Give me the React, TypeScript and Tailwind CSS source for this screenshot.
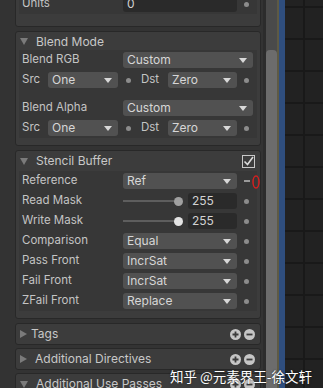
import type { ReactNode } from 'react'

const font = { fontFamily: 'Inter, "Noto Sans", sans-serif' }

function Dot() {
  return (
    <div className="flex w-[19px] shrink-0 items-center justify-center">
      <div className="h-[5px] w-[5px] rounded-full bg-[#8c8c8c]" />
    </div>
  )
}

function Arrow() {
  return (
    <svg width="8" height="5" viewBox="0 0 8 5" className="shrink-0">
      <path d="M0 0 L8 0 L4 5 Z" fill="#d8d8d8" />
    </svg>
  )
}

function Dropdown({ value, width }: { value: string; width: string }) {
  return (
    <div className={`flex h-[16px] ${width} shrink-0 items-center justify-between rounded-[3px] bg-[#515151] pl-[4px] pr-[6px] text-[12px] text-[#d6d6d6]`}>
      <span>{value}</span>
      <Arrow />
    </div>
  )
}

function Row({ label, children }: { label: string; children: ReactNode }) {
  return (
    <div className="flex h-[20px] items-center pl-[3px]">
      <div className="w-[101px] shrink-0 text-[11.5px] text-[#c4c4c4]">{label}</div>
      {children}
    </div>
  )
}

function SrcDst() {
  return (
    <div className="flex h-[20px] items-center pl-[3px] text-[11.5px] text-[#c4c4c4]">
      <div className="w-[26px] shrink-0">Src</div>
      <Dropdown value="One" width="w-[70px]" />
      <div className="flex w-[20px] shrink-0 items-center justify-center">
        <div className="h-[5px] w-[5px] rounded-full bg-[#8c8c8c]" />
      </div>
      <div className="w-[30px] shrink-0 pl-[3px]">Dst</div>
      <Dropdown value="Zero" width="w-[69px]" />
      <Dot />
    </div>
  )
}

function Slider({ label, knob }: { label: string; knob: string }) {
  return (
    <Row label={label}>
      <div className="flex w-[65px] shrink-0 items-center">
        <div className="h-[2px] w-[51px] bg-[#5e5e5e]" />
        <div className={`h-[9px] w-[9px] rounded-full ${knob}`} />
      </div>
      <div className="flex h-[16px] w-[49px] shrink-0 items-center rounded-[3px] bg-[#2a2a2a] pl-[4px] text-[12px] text-[#d2d2d2]">
        255
      </div>
      <Dot />
    </Row>
  )
}

function Box({ children, className = '' }: { children: ReactNode; className?: string }) {
  return (
    <div className={`ml-[15px] mr-[2px] rounded-[3px] border border-[#282828] bg-[#3c3c3c] ${className}`}>
      {children}
    </div>
  )
}

function Header({
  title,
  open,
  right,
  textPad = 'pl-[8px]',
  height = 'h-[18px]',
}: {
  title: string
  open: boolean
  right?: ReactNode
  textPad?: string
  height?: string
}) {
  return (
    <div className={`flex ${height} items-center pl-[4px] pr-[4px]`}>
      {open ? (
        <svg width="8" height="7" viewBox="0 0 8 7" className="shrink-0">
          <path d="M0 0 L8 0 L4 7 Z" fill="#7b7b7b" />
        </svg>
      ) : (
        <svg width="7" height="8" viewBox="0 0 7 8" className="shrink-0">
          <path d="M0 0 L7 4 L0 8 Z" fill="#7b7b7b" />
        </svg>
      )}
      <div className={`flex-1 ${textPad} text-[12px] text-[#c8c8c8]`}>{title}</div>
      {right}
    </div>
  )
}

function PlusMinus() {
  return (
    <div className="flex items-center gap-[3px] pr-[1px]">
      <svg width="11" height="11" viewBox="0 0 11 11">
        <circle cx="5.5" cy="5.5" r="5.5" fill="#c6c6c6" />
        <path d="M2.5 5.5 H8.5 M5.5 2.5 V8.5" stroke="#3c3c3c" strokeWidth="1.8" />
      </svg>
      <svg width="11" height="11" viewBox="0 0 11 11">
        <circle cx="5.5" cy="5.5" r="5.5" fill="#c6c6c6" />
        <path d="M2.5 5.5 H8.5" stroke="#3c3c3c" strokeWidth="1.8" />
      </svg>
    </div>
  )
}

function Checkbox() {
  return (
    <svg width="13" height="13" viewBox="0 0 13 13" className="mr-[1px]">
      <rect x="0.5" y="0.5" width="12" height="12" fill="#3c3c3c" stroke="#c8c8c8" />
      <path d="M2.5 6.5 L5.5 9.5 L11 2" stroke="#dcdcdc" strokeWidth="1.6" fill="none" />
    </svg>
  )
}

function Grid() {
  const rows = [6, 38, 70, 102, 134, 166, 198, 230, 262, 294, 326, 358]
  return (
    <svg width="38" height="388" viewBox="0 0 38 388">
      <rect width="38" height="388" fill="#222222" />
      <rect x="18" width="2" height="388" fill="#191919" />
      {rows.map((y) => (
        <rect key={y} y={y} width="38" height="2" fill="#191919" />
      ))}
    </svg>
  )
}

export default function App() {
  return (
    <div className="relative flex h-[388px] w-[323px] overflow-hidden bg-[#383838]" style={font}>
      <div className="flex w-[263px] shrink-0 flex-col gap-[4px] bg-[#333333]">
        <Box className="-mt-[7px] pb-[12px]">
          <div className="mx-[3px] bg-[#373737]">
            <Row label="Units">
              <div className="flex h-[16px] w-[114px] shrink-0 items-center rounded-[3px] bg-[#2a2a2a] pl-[4px] text-[12px] text-[#d2d2d2]">
                0
              </div>
              <Dot />
            </Row>
          </div>
        </Box>

        <Box className="pb-[7px]">
          <Header title="Blend Mode" open height="h-[18px] pt-[1px]" />
          <div className="mx-[3px] bg-[#373737]">
            <Row label="Blend RGB">
              <Dropdown value="Custom" width="w-[130px]" />
            </Row>
            <SrcDst />
            <div className="h-[8px]" />
            <Row label="Blend Alpha">
              <Dropdown value="Custom" width="w-[130px]" />
            </Row>
            <SrcDst />
          </div>
        </Box>

        <Box className="pb-[7px]">
          <Header title="Stencil Buffer" open height="h-[20px]" right={<Checkbox />} />
          <div className="mx-[3px] bg-[#373737]">
            <Row label="Reference">
              <Dropdown value="Ref" width="w-[114px]" />
              <div className="flex w-[19px] shrink-0 items-center justify-center">
                <div className="h-[2px] w-[6px] bg-[#9a9a9a]" />
              </div>
            </Row>
            <Slider label="Read Mask" knob="bg-[#a0a0a0]" />
            <Slider label="Write Mask" knob="bg-[#e4e4e4]" />
            <Row label="Comparison">
              <Dropdown value="Equal" width="w-[114px]" />
              <Dot />
            </Row>
            <Row label="Pass Front">
              <Dropdown value="IncrSat" width="w-[114px]" />
              <Dot />
            </Row>
            <Row label="Fail Front">
              <Dropdown value="IncrSat" width="w-[114px]" />
              <Dot />
            </Row>
            <Row label="ZFail Front">
              <Dropdown value="Replace" width="w-[114px]" />
              <Dot />
            </Row>
          </div>
        </Box>

        <div className="flex flex-col gap-[3px]">
          <Box>
            <Header title="Tags" open={false} textPad="pl-[4px]" height="h-[20px]" right={<PlusMinus />} />
          </Box>
          <Box>
            <Header title="Additional Directives" open={false} height="h-[20px]" right={<PlusMinus />} />
          </Box>
          <Box>
            <Header title="Additional Use Passes" open height="h-[20px]" right={<PlusMinus />} />
          </Box>
        </div>
      </div>

      <div className="flex w-[16px] shrink-0 bg-[#2c2c2c]">
        <div className="ml-[3px] flex w-[11px] flex-col bg-[#4a4a4a]">
          <div className="h-[50px]" />
          <div className="flex-1 rounded-t-[4px] bg-[#6c6c6c]" />
        </div>
        <div className="w-[2px] bg-[#5e5a44]" />
      </div>
      <div className="w-[6px] shrink-0 bg-[#2f4e7e]" />
      <Grid />

      <svg width="10" height="16" viewBox="0 0 10 16" className="absolute left-[251px] top-[174px]">
        <ellipse cx="5" cy="8" rx="3" ry="6" fill="none" stroke="#d42020" strokeWidth="1.5" />
      </svg>

      <div
        className="absolute left-[170px] top-[366px] text-[13.5px] text-white"
        style={{ fontFamily: '"Noto Sans CJK SC", "Noto Sans", sans-serif', textShadow: '0 0 2px rgba(0,0,0,0.6)' }}
      >
        知乎 @元素界王-徐文轩
      </div>
    </div>
  )
}
